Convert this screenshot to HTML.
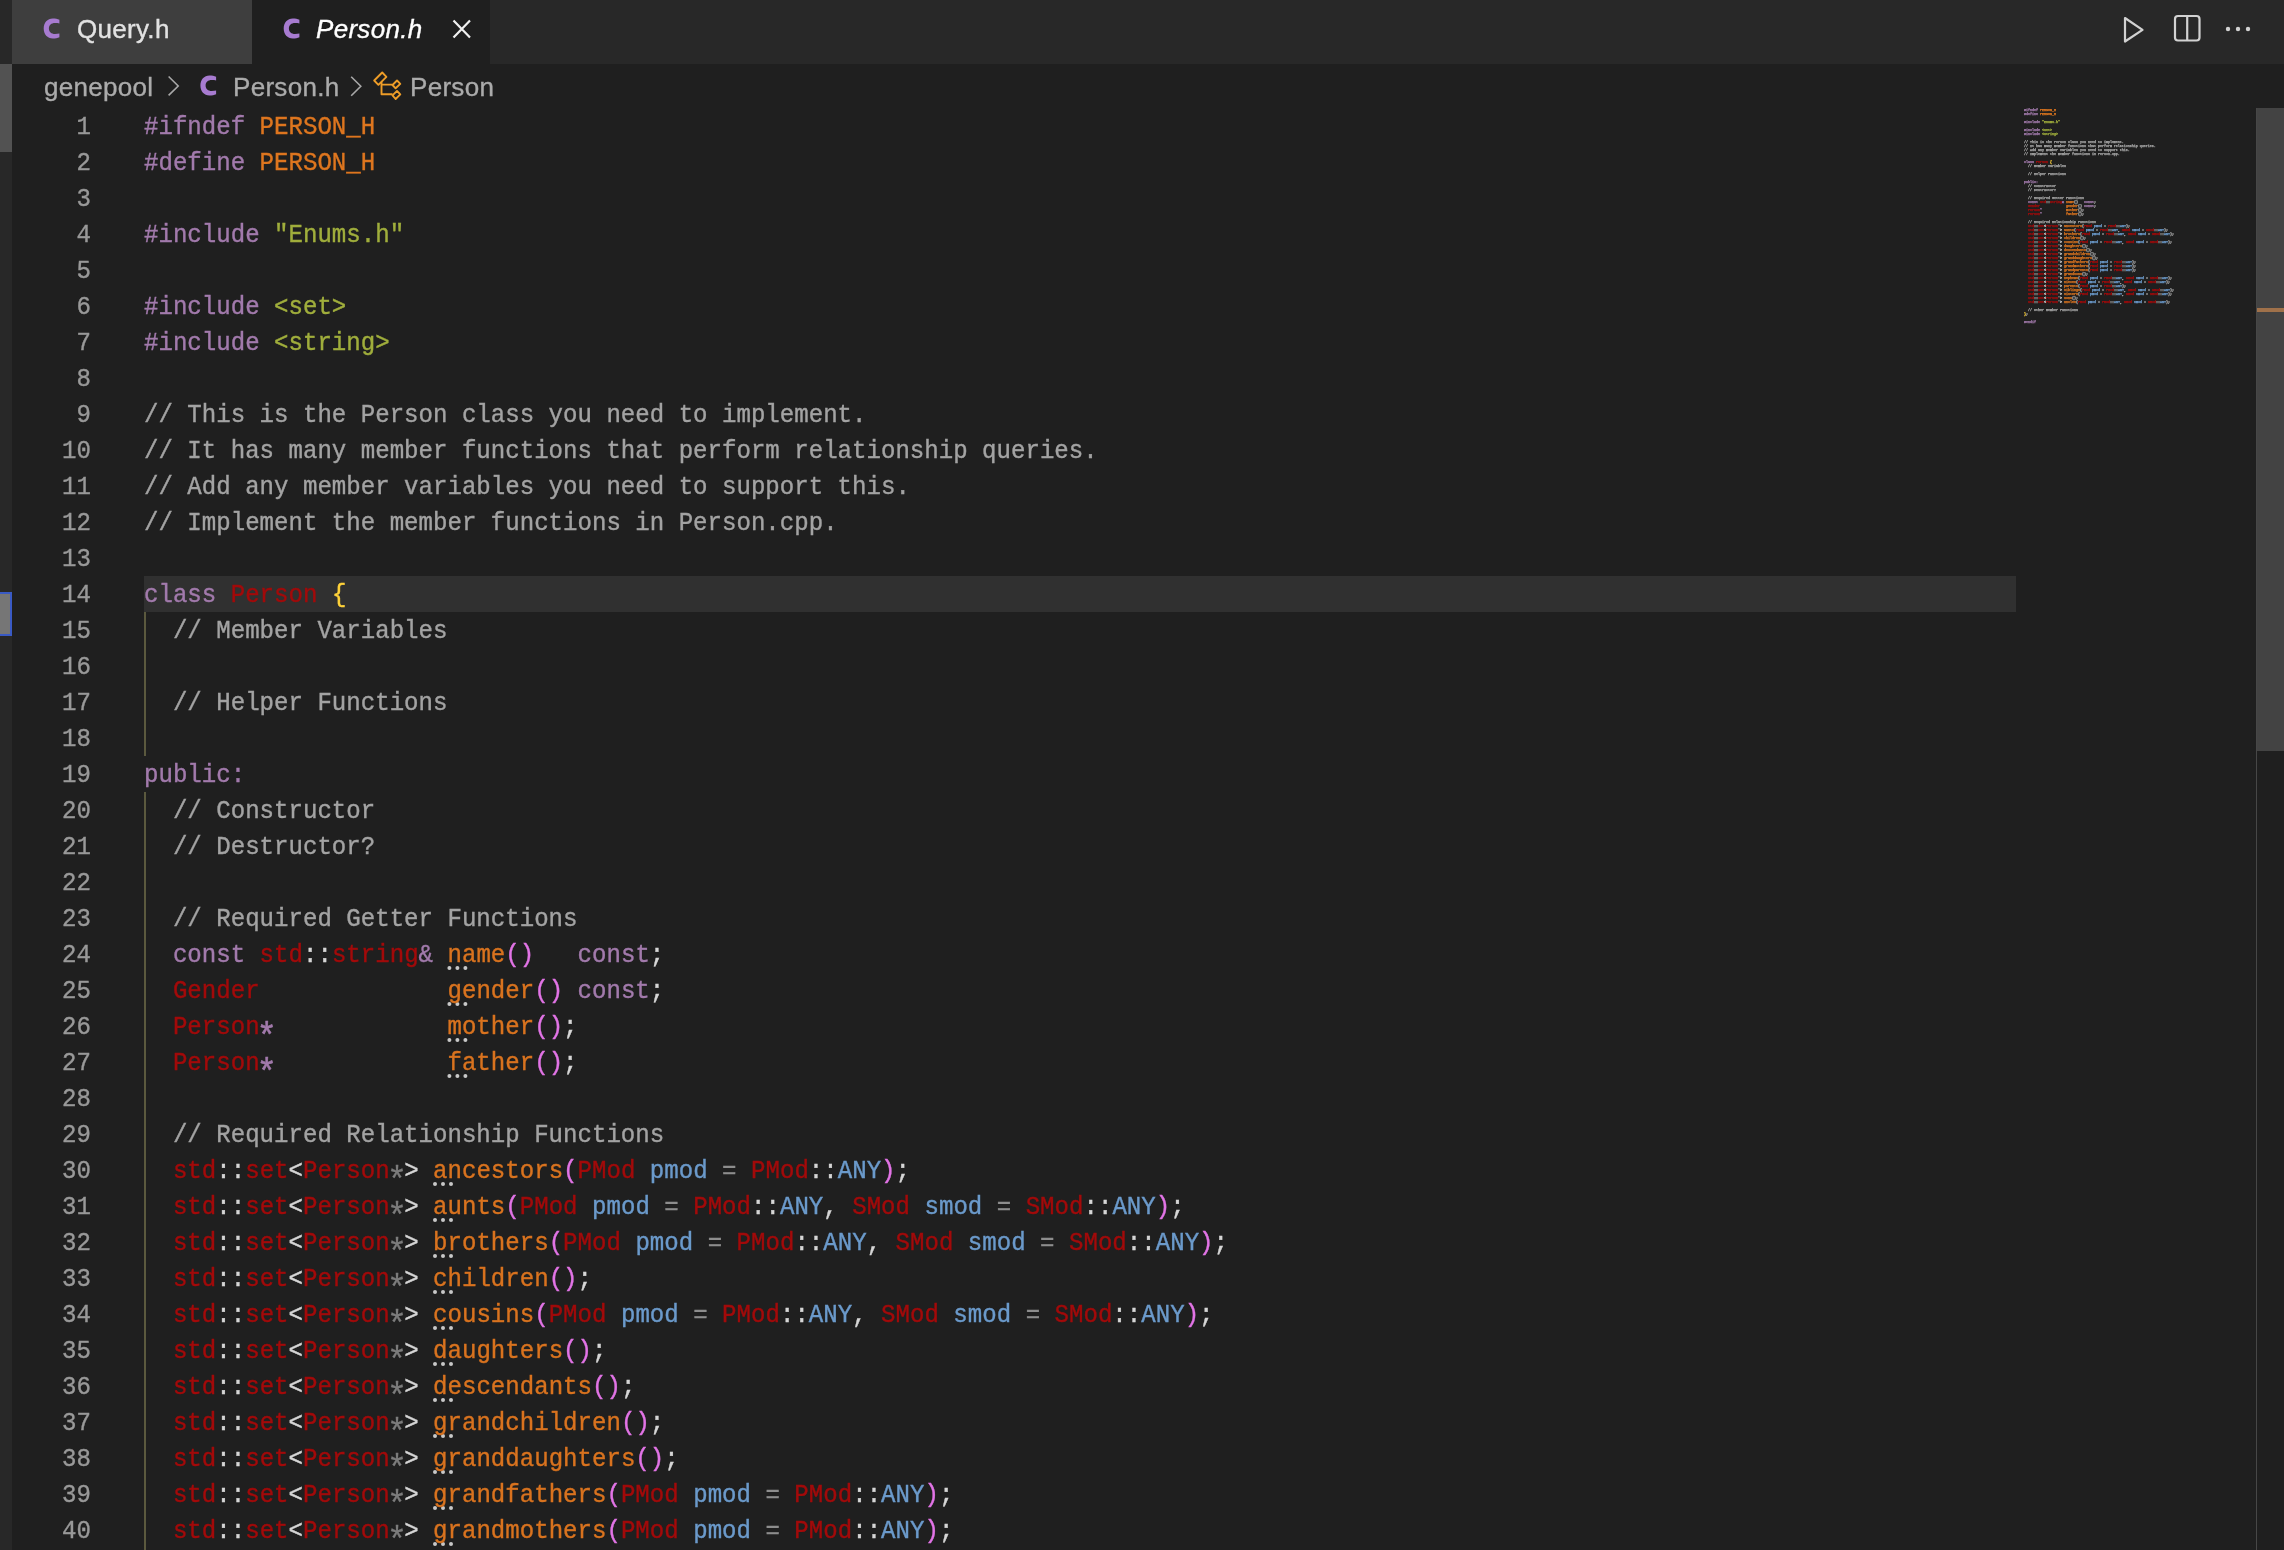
<!DOCTYPE html>
<html><head><meta charset="utf-8">
<style>
html,body{margin:0;padding:0;}
body{width:2284px;height:1550px;overflow:hidden;background:#1F1F1F;position:relative;font-family:"Liberation Sans",sans-serif;}
.abs{position:absolute;}
#tabbar{left:0;top:0;width:2284px;height:64px;background:#282828;}
#lstrip{left:0;top:0;width:12px;height:1550px;background:#282828;}
#tab1{left:12px;top:0;width:240px;height:64px;background:#3E3E3E;}
#tab2{left:252px;top:0;width:238px;height:64px;background:#1F1F1F;}
.ui{position:absolute;font-size:26px;white-space:pre;line-height:30px;will-change:transform;-webkit-text-stroke:0.35px currentColor;letter-spacing:0.3px}
.mono{font-family:"Liberation Mono",monospace;}
#code{left:144px;top:109px;transform-origin:0 0;transform:scaleX(0.92614);}
.ln{position:absolute;left:0;height:36px;line-height:36px;font-size:26px;white-space:pre;font-family:"Liberation Mono",monospace;color:#D6D6D6;-webkit-text-stroke:0.4px currentColor;}
.num{position:absolute;left:0;width:91px;text-align:right;height:36px;line-height:36px;font-size:26px;font-family:"Liberation Mono",monospace;color:#999999;-webkit-text-stroke:0.4px currentColor;}
.mml{position:absolute;left:0;height:4px;line-height:4px;font-size:3.333px;white-space:pre;font-family:"Liberation Mono",monospace;color:#D6D6D6;font-weight:bold;}
.ln .ast,.ln .asp{display:inline-block;width:15.6px;font-size:36px;height:36px;line-height:36px;vertical-align:top;position:relative;top:11.5px;left:-3px;text-align:left;-webkit-text-stroke:0.6px currentColor}
.ln .ast{-webkit-text-stroke:0.3px currentColor}
.mml .ast,.mml .asp{top:0}
.mml .par{color:#BDBDBD}
.mml{-webkit-text-stroke:0.25px currentColor}
.pp{color:#A27AAC}
.kw{color:#A27AAC}
.mac{color:#DE761F}
.str{color:#A0AE3C}
.cm{color:#A3A3A3}
.ty{color:#A20A0A}
.fn{color:#D9731F}
.par{color:#E274E6}
.br{color:#FFD23A}
.pun{color:#D6D6D6}
.op{color:#8E8E8E}
.amp{color:#A27AAC}
.var{color:#6B9ACB}
.txt{color:#D6D6D6}
.ast{color:#7C7C7C}
.asp{color:#A27AAC}
</style></head><body>
<div id="tabbar" class="abs"></div>
<div id="lstrip" class="abs"></div>
<div class="abs" style="left:0;top:64px;width:12px;height:88px;background:#525252"></div>
<div class="abs" style="left:0;top:592px;width:10px;height:40px;background:#767676;border:2px solid #3A5AC4;border-left:none"></div>
<div id="tab1" class="abs"></div>
<div id="tab2" class="abs"></div>
<!-- line highlight -->
<div class="abs" style="left:144px;top:576px;width:1872px;height:36px;background:#303030"></div>
<!-- indent guides -->
<div class="abs" style="left:144px;top:612px;width:2px;height:144px;background:#5B593E"></div>
<div class="abs" style="left:144px;top:792px;width:2px;height:758px;background:#5B593E"></div>
<!-- scrollbar -->
<div class="abs" style="left:2256px;top:108px;width:1px;height:1442px;background:#474747"></div>
<div class="abs" style="left:2257px;top:108px;width:27px;height:643px;background:#434343"></div>
<div class="abs" style="left:2257px;top:308px;width:27px;height:4px;background:#A0714A"></div>

<!-- tab texts -->
<div class="ui" style="left:77px;top:14px;color:#E2E2E2">Query.h</div>
<div class="ui" style="left:316px;top:14px;color:#FFFFFF;font-style:italic">Person.h</div>
<div class="ui" style="left:44px;top:72px;color:#ABABAB">genepool</div>
<div class="ui" style="left:233px;top:72px;color:#ABABAB">Person.h</div>
<div class="ui" style="left:410px;top:72px;color:#ABABAB">Person</div>

<svg class="abs" style="left:0;top:0" width="2284" height="1550" viewBox="0 0 2284 1550">
 <g fill="#A77BD0">
  <path d="M59.4,19.8 C57.6,18.9 55.3,18.5 52.8,18.5 C47.4,18.5 43.7,22.7 43.7,28.5 C43.7,34.3 47.4,38.5 52.8,38.5 C55.3,38.5 57.6,38.1 59.4,37.2 L59.4,33.6 C58.2,33.9 56.6,34 55,34 C51.3,34 48.9,31.8 48.9,28.5 C48.9,25.2 51.3,23 55,23 C56.6,23 58.2,23.1 59.4,23.4 Z"/>
  <path d="M59.4,19.8 C57.6,18.9 55.3,18.5 52.8,18.5 C47.4,18.5 43.7,22.7 43.7,28.5 C43.7,34.3 47.4,38.5 52.8,38.5 C55.3,38.5 57.6,38.1 59.4,37.2 L59.4,33.6 C58.2,33.9 56.6,34 55,34 C51.3,34 48.9,31.8 48.9,28.5 C48.9,25.2 51.3,23 55,23 C56.6,23 58.2,23.1 59.4,23.4 Z" transform="translate(240,0)"/>
  <path d="M59.4,19.8 C57.6,18.9 55.3,18.5 52.8,18.5 C47.4,18.5 43.7,22.7 43.7,28.5 C43.7,34.3 47.4,38.5 52.8,38.5 C55.3,38.5 57.6,38.1 59.4,37.2 L59.4,33.6 C58.2,33.9 56.6,34 55,34 C51.3,34 48.9,31.8 48.9,28.5 C48.9,25.2 51.3,23 55,23 C56.6,23 58.2,23.1 59.4,23.4 Z" transform="translate(156.7,57)"/>
 </g>
 <g fill="none" stroke="#F0F0F0" stroke-width="2.2" stroke-linecap="butt">
  <path d="M453.5 20.5 L470 37.5 M470 20.5 L453.5 37.5"/>
 </g>
 <g fill="none" stroke="#D2D2D2" stroke-width="2.2" stroke-linejoin="miter">
  <path d="M2125 18 L2142.5 29.8 L2125 41.5 Z" stroke-linejoin="round"/>
  <rect x="2175" y="16" width="24.5" height="24.5" rx="3"/>
  <path d="M2187.2 16 V40.5"/>
 </g>
 <g fill="#D2D2D2">
  <circle cx="2228" cy="29" r="2.2"/><circle cx="2238" cy="29" r="2.2"/><circle cx="2248" cy="29" r="2.2"/>
 </g>
 <g fill="none" stroke="#A8A8A8" stroke-width="1.6">
  <path d="M168.6 76.5 L178.2 86 L168.6 95.4"/>
  <path d="M351.2 76.8 L360.8 86.2 L351.2 95.8"/>
 </g>
 <g fill="none" stroke="#EE9D28" stroke-width="1.9" stroke-linejoin="round">
  <path d="M374.2 80.5 L382.2 72.5 L386.4 76.8 L378.4 84.8 Z"/>
  <path d="M381.5 82 V94.3 H392.5 M381.5 84.6 H392"/>
  <path d="M392.5 85 L397 80.5 L400.3 83.9 L395.6 88.3 Z"/>
  <path d="M392.5 95.4 L397 90.9 L400.3 94.3 L395.6 99 Z"/>
 </g>
 <g fill="#C8C8C8">
<circle cx="449.4" cy="968.0" r="2"/>
<circle cx="457.4" cy="968.0" r="2"/>
<circle cx="465.4" cy="968.0" r="2"/>
<circle cx="449.4" cy="1004.0" r="2"/>
<circle cx="457.4" cy="1004.0" r="2"/>
<circle cx="465.4" cy="1004.0" r="2"/>
<circle cx="449.4" cy="1040.0" r="2"/>
<circle cx="457.4" cy="1040.0" r="2"/>
<circle cx="465.4" cy="1040.0" r="2"/>
<circle cx="449.4" cy="1076.0" r="2"/>
<circle cx="457.4" cy="1076.0" r="2"/>
<circle cx="465.4" cy="1076.0" r="2"/>
<circle cx="435.0" cy="1184.0" r="2"/>
<circle cx="443.0" cy="1184.0" r="2"/>
<circle cx="451.0" cy="1184.0" r="2"/>
<circle cx="435.0" cy="1220.0" r="2"/>
<circle cx="443.0" cy="1220.0" r="2"/>
<circle cx="451.0" cy="1220.0" r="2"/>
<circle cx="435.0" cy="1256.0" r="2"/>
<circle cx="443.0" cy="1256.0" r="2"/>
<circle cx="451.0" cy="1256.0" r="2"/>
<circle cx="435.0" cy="1292.0" r="2"/>
<circle cx="443.0" cy="1292.0" r="2"/>
<circle cx="451.0" cy="1292.0" r="2"/>
<circle cx="435.0" cy="1328.0" r="2"/>
<circle cx="443.0" cy="1328.0" r="2"/>
<circle cx="451.0" cy="1328.0" r="2"/>
<circle cx="435.0" cy="1364.0" r="2"/>
<circle cx="443.0" cy="1364.0" r="2"/>
<circle cx="451.0" cy="1364.0" r="2"/>
<circle cx="435.0" cy="1400.0" r="2"/>
<circle cx="443.0" cy="1400.0" r="2"/>
<circle cx="451.0" cy="1400.0" r="2"/>
<circle cx="435.0" cy="1436.0" r="2"/>
<circle cx="443.0" cy="1436.0" r="2"/>
<circle cx="451.0" cy="1436.0" r="2"/>
<circle cx="435.0" cy="1472.0" r="2"/>
<circle cx="443.0" cy="1472.0" r="2"/>
<circle cx="451.0" cy="1472.0" r="2"/>
<circle cx="435.0" cy="1508.0" r="2"/>
<circle cx="443.0" cy="1508.0" r="2"/>
<circle cx="451.0" cy="1508.0" r="2"/>
<circle cx="435.0" cy="1544.0" r="2"/>
<circle cx="443.0" cy="1544.0" r="2"/>
<circle cx="451.0" cy="1544.0" r="2"/>
 </g>
</svg>

<div id="minimap" class="abs" style="left:2024px;top:108px;width:230px;height:260px;">
<div class="mml" style="top:0px"><span class="pp">#ifndef</span> <span class="mac">PERSON_H</span></div>
<div class="mml" style="top:4px"><span class="pp">#define</span> <span class="mac">PERSON_H</span></div>
<div class="mml" style="top:8px"></div>
<div class="mml" style="top:12px"><span class="pp">#include</span> <span class="str">&quot;Enums.h&quot;</span></div>
<div class="mml" style="top:16px"></div>
<div class="mml" style="top:20px"><span class="pp">#include</span> <span class="str">&lt;set&gt;</span></div>
<div class="mml" style="top:24px"><span class="pp">#include</span> <span class="str">&lt;string&gt;</span></div>
<div class="mml" style="top:28px"></div>
<div class="mml" style="top:32px"><span class="cm">// This is the Person class you need to implement.</span></div>
<div class="mml" style="top:36px"><span class="cm">// It has many member functions that perform relationship queries.</span></div>
<div class="mml" style="top:40px"><span class="cm">// Add any member variables you need to support this.</span></div>
<div class="mml" style="top:44px"><span class="cm">// Implement the member functions in Person.cpp.</span></div>
<div class="mml" style="top:48px"></div>
<div class="mml" style="top:52px"><span class="kw">class</span> <span class="ty">Person</span> <span class="br">{</span></div>
<div class="mml" style="top:56px">  <span class="cm">// Member Variables</span></div>
<div class="mml" style="top:60px"></div>
<div class="mml" style="top:64px">  <span class="cm">// Helper Functions</span></div>
<div class="mml" style="top:68px"></div>
<div class="mml" style="top:72px"><span class="kw">public:</span></div>
<div class="mml" style="top:76px">  <span class="cm">// Constructor</span></div>
<div class="mml" style="top:80px">  <span class="cm">// Destructor?</span></div>
<div class="mml" style="top:84px"></div>
<div class="mml" style="top:88px">  <span class="cm">// Required Getter Functions</span></div>
<div class="mml" style="top:92px">  <span class="kw">const</span> <span class="ty">std</span><span class="pun">::</span><span class="ty">string</span><span class="amp">&amp;</span> <span class="fn">name</span><span class="par">()</span>   <span class="kw">const</span><span class="pun">;</span></div>
<div class="mml" style="top:96px">  <span class="ty">Gender</span>             <span class="fn">gender</span><span class="par">()</span> <span class="kw">const</span><span class="pun">;</span></div>
<div class="mml" style="top:100px">  <span class="ty">Person</span><span class="asp">*</span>            <span class="fn">mother</span><span class="par">()</span><span class="pun">;</span></div>
<div class="mml" style="top:104px">  <span class="ty">Person</span><span class="asp">*</span>            <span class="fn">father</span><span class="par">()</span><span class="pun">;</span></div>
<div class="mml" style="top:108px"></div>
<div class="mml" style="top:112px">  <span class="cm">// Required Relationship Functions</span></div>
<div class="mml" style="top:116px">  <span class="ty">std</span><span class="pun">::</span><span class="ty">set</span><span class="pun">&lt;</span><span class="ty">Person</span><span class="ast">*</span><span class="pun">&gt;</span> <span class="fn">ancestors</span><span class="par">(</span><span class="ty">PMod</span> <span class="var">pmod</span> <span class="op">=</span> <span class="ty">PMod</span><span class="pun">::</span><span class="var">ANY</span><span class="par">)</span><span class="pun">;</span></div>
<div class="mml" style="top:120px">  <span class="ty">std</span><span class="pun">::</span><span class="ty">set</span><span class="pun">&lt;</span><span class="ty">Person</span><span class="ast">*</span><span class="pun">&gt;</span> <span class="fn">aunts</span><span class="par">(</span><span class="ty">PMod</span> <span class="var">pmod</span> <span class="op">=</span> <span class="ty">PMod</span><span class="pun">::</span><span class="var">ANY</span><span class="pun">,</span> <span class="ty">SMod</span> <span class="var">smod</span> <span class="op">=</span> <span class="ty">SMod</span><span class="pun">::</span><span class="var">ANY</span><span class="par">)</span><span class="pun">;</span></div>
<div class="mml" style="top:124px">  <span class="ty">std</span><span class="pun">::</span><span class="ty">set</span><span class="pun">&lt;</span><span class="ty">Person</span><span class="ast">*</span><span class="pun">&gt;</span> <span class="fn">brothers</span><span class="par">(</span><span class="ty">PMod</span> <span class="var">pmod</span> <span class="op">=</span> <span class="ty">PMod</span><span class="pun">::</span><span class="var">ANY</span><span class="pun">,</span> <span class="ty">SMod</span> <span class="var">smod</span> <span class="op">=</span> <span class="ty">SMod</span><span class="pun">::</span><span class="var">ANY</span><span class="par">)</span><span class="pun">;</span></div>
<div class="mml" style="top:128px">  <span class="ty">std</span><span class="pun">::</span><span class="ty">set</span><span class="pun">&lt;</span><span class="ty">Person</span><span class="ast">*</span><span class="pun">&gt;</span> <span class="fn">children</span><span class="par">(</span><span class="par">)</span><span class="pun">;</span></div>
<div class="mml" style="top:132px">  <span class="ty">std</span><span class="pun">::</span><span class="ty">set</span><span class="pun">&lt;</span><span class="ty">Person</span><span class="ast">*</span><span class="pun">&gt;</span> <span class="fn">cousins</span><span class="par">(</span><span class="ty">PMod</span> <span class="var">pmod</span> <span class="op">=</span> <span class="ty">PMod</span><span class="pun">::</span><span class="var">ANY</span><span class="pun">,</span> <span class="ty">SMod</span> <span class="var">smod</span> <span class="op">=</span> <span class="ty">SMod</span><span class="pun">::</span><span class="var">ANY</span><span class="par">)</span><span class="pun">;</span></div>
<div class="mml" style="top:136px">  <span class="ty">std</span><span class="pun">::</span><span class="ty">set</span><span class="pun">&lt;</span><span class="ty">Person</span><span class="ast">*</span><span class="pun">&gt;</span> <span class="fn">daughters</span><span class="par">(</span><span class="par">)</span><span class="pun">;</span></div>
<div class="mml" style="top:140px">  <span class="ty">std</span><span class="pun">::</span><span class="ty">set</span><span class="pun">&lt;</span><span class="ty">Person</span><span class="ast">*</span><span class="pun">&gt;</span> <span class="fn">descendants</span><span class="par">(</span><span class="par">)</span><span class="pun">;</span></div>
<div class="mml" style="top:144px">  <span class="ty">std</span><span class="pun">::</span><span class="ty">set</span><span class="pun">&lt;</span><span class="ty">Person</span><span class="ast">*</span><span class="pun">&gt;</span> <span class="fn">grandchildren</span><span class="par">(</span><span class="par">)</span><span class="pun">;</span></div>
<div class="mml" style="top:148px">  <span class="ty">std</span><span class="pun">::</span><span class="ty">set</span><span class="pun">&lt;</span><span class="ty">Person</span><span class="ast">*</span><span class="pun">&gt;</span> <span class="fn">granddaughters</span><span class="par">(</span><span class="par">)</span><span class="pun">;</span></div>
<div class="mml" style="top:152px">  <span class="ty">std</span><span class="pun">::</span><span class="ty">set</span><span class="pun">&lt;</span><span class="ty">Person</span><span class="ast">*</span><span class="pun">&gt;</span> <span class="fn">grandfathers</span><span class="par">(</span><span class="ty">PMod</span> <span class="var">pmod</span> <span class="op">=</span> <span class="ty">PMod</span><span class="pun">::</span><span class="var">ANY</span><span class="par">)</span><span class="pun">;</span></div>
<div class="mml" style="top:156px">  <span class="ty">std</span><span class="pun">::</span><span class="ty">set</span><span class="pun">&lt;</span><span class="ty">Person</span><span class="ast">*</span><span class="pun">&gt;</span> <span class="fn">grandmothers</span><span class="par">(</span><span class="ty">PMod</span> <span class="var">pmod</span> <span class="op">=</span> <span class="ty">PMod</span><span class="pun">::</span><span class="var">ANY</span><span class="par">)</span><span class="pun">;</span></div>
<div class="mml" style="top:160px">  <span class="ty">std</span><span class="pun">::</span><span class="ty">set</span><span class="pun">&lt;</span><span class="ty">Person</span><span class="ast">*</span><span class="pun">&gt;</span> <span class="fn">grandparents</span><span class="par">(</span><span class="ty">PMod</span> <span class="var">pmod</span> <span class="op">=</span> <span class="ty">PMod</span><span class="pun">::</span><span class="var">ANY</span><span class="par">)</span><span class="pun">;</span></div>
<div class="mml" style="top:164px">  <span class="ty">std</span><span class="pun">::</span><span class="ty">set</span><span class="pun">&lt;</span><span class="ty">Person</span><span class="ast">*</span><span class="pun">&gt;</span> <span class="fn">grandsons</span><span class="par">(</span><span class="par">)</span><span class="pun">;</span></div>
<div class="mml" style="top:168px">  <span class="ty">std</span><span class="pun">::</span><span class="ty">set</span><span class="pun">&lt;</span><span class="ty">Person</span><span class="ast">*</span><span class="pun">&gt;</span> <span class="fn">nephews</span><span class="par">(</span><span class="ty">PMod</span> <span class="var">pmod</span> <span class="op">=</span> <span class="ty">PMod</span><span class="pun">::</span><span class="var">ANY</span><span class="pun">,</span> <span class="ty">SMod</span> <span class="var">smod</span> <span class="op">=</span> <span class="ty">SMod</span><span class="pun">::</span><span class="var">ANY</span><span class="par">)</span><span class="pun">;</span></div>
<div class="mml" style="top:172px">  <span class="ty">std</span><span class="pun">::</span><span class="ty">set</span><span class="pun">&lt;</span><span class="ty">Person</span><span class="ast">*</span><span class="pun">&gt;</span> <span class="fn">nieces</span><span class="par">(</span><span class="ty">PMod</span> <span class="var">pmod</span> <span class="op">=</span> <span class="ty">PMod</span><span class="pun">::</span><span class="var">ANY</span><span class="pun">,</span> <span class="ty">SMod</span> <span class="var">smod</span> <span class="op">=</span> <span class="ty">SMod</span><span class="pun">::</span><span class="var">ANY</span><span class="par">)</span><span class="pun">;</span></div>
<div class="mml" style="top:176px">  <span class="ty">std</span><span class="pun">::</span><span class="ty">set</span><span class="pun">&lt;</span><span class="ty">Person</span><span class="ast">*</span><span class="pun">&gt;</span> <span class="fn">parents</span><span class="par">(</span><span class="ty">PMod</span> <span class="var">pmod</span> <span class="op">=</span> <span class="ty">PMod</span><span class="pun">::</span><span class="var">ANY</span><span class="par">)</span><span class="pun">;</span></div>
<div class="mml" style="top:180px">  <span class="ty">std</span><span class="pun">::</span><span class="ty">set</span><span class="pun">&lt;</span><span class="ty">Person</span><span class="ast">*</span><span class="pun">&gt;</span> <span class="fn">siblings</span><span class="par">(</span><span class="ty">PMod</span> <span class="var">pmod</span> <span class="op">=</span> <span class="ty">PMod</span><span class="pun">::</span><span class="var">ANY</span><span class="pun">,</span> <span class="ty">SMod</span> <span class="var">smod</span> <span class="op">=</span> <span class="ty">SMod</span><span class="pun">::</span><span class="var">ANY</span><span class="par">)</span><span class="pun">;</span></div>
<div class="mml" style="top:184px">  <span class="ty">std</span><span class="pun">::</span><span class="ty">set</span><span class="pun">&lt;</span><span class="ty">Person</span><span class="ast">*</span><span class="pun">&gt;</span> <span class="fn">sisters</span><span class="par">(</span><span class="ty">PMod</span> <span class="var">pmod</span> <span class="op">=</span> <span class="ty">PMod</span><span class="pun">::</span><span class="var">ANY</span><span class="pun">,</span> <span class="ty">SMod</span> <span class="var">smod</span> <span class="op">=</span> <span class="ty">SMod</span><span class="pun">::</span><span class="var">ANY</span><span class="par">)</span><span class="pun">;</span></div>
<div class="mml" style="top:188px">  <span class="ty">std</span><span class="pun">::</span><span class="ty">set</span><span class="pun">&lt;</span><span class="ty">Person</span><span class="ast">*</span><span class="pun">&gt;</span> <span class="fn">sons</span><span class="par">(</span><span class="par">)</span><span class="pun">;</span></div>
<div class="mml" style="top:192px">  <span class="ty">std</span><span class="pun">::</span><span class="ty">set</span><span class="pun">&lt;</span><span class="ty">Person</span><span class="ast">*</span><span class="pun">&gt;</span> <span class="fn">uncles</span><span class="par">(</span><span class="ty">PMod</span> <span class="var">pmod</span> <span class="op">=</span> <span class="ty">PMod</span><span class="pun">::</span><span class="var">ANY</span><span class="pun">,</span> <span class="ty">SMod</span> <span class="var">smod</span> <span class="op">=</span> <span class="ty">SMod</span><span class="pun">::</span><span class="var">ANY</span><span class="par">)</span><span class="pun">;</span></div>
<div class="mml" style="top:196px"></div>
<div class="mml" style="top:200px">  <span class="cm">// Other Member Functions</span></div>
<div class="mml" style="top:204px"><span class="br">}</span><span class="pun">;</span></div>
<div class="mml" style="top:208px"></div>
<div class="mml" style="top:212px"><span class="pp">#endif</span></div>
</div>
<div id="nums" class="abs" style="left:0;top:1px;transform-origin:91px 0;transform:scaleX(0.92614)">
<div class="num" style="top:108px">1</div>
<div class="num" style="top:144px">2</div>
<div class="num" style="top:180px">3</div>
<div class="num" style="top:216px">4</div>
<div class="num" style="top:252px">5</div>
<div class="num" style="top:288px">6</div>
<div class="num" style="top:324px">7</div>
<div class="num" style="top:360px">8</div>
<div class="num" style="top:396px">9</div>
<div class="num" style="top:432px">10</div>
<div class="num" style="top:468px">11</div>
<div class="num" style="top:504px">12</div>
<div class="num" style="top:540px">13</div>
<div class="num" style="top:576px">14</div>
<div class="num" style="top:612px">15</div>
<div class="num" style="top:648px">16</div>
<div class="num" style="top:684px">17</div>
<div class="num" style="top:720px">18</div>
<div class="num" style="top:756px">19</div>
<div class="num" style="top:792px">20</div>
<div class="num" style="top:828px">21</div>
<div class="num" style="top:864px">22</div>
<div class="num" style="top:900px">23</div>
<div class="num" style="top:936px">24</div>
<div class="num" style="top:972px">25</div>
<div class="num" style="top:1008px">26</div>
<div class="num" style="top:1044px">27</div>
<div class="num" style="top:1080px">28</div>
<div class="num" style="top:1116px">29</div>
<div class="num" style="top:1152px">30</div>
<div class="num" style="top:1188px">31</div>
<div class="num" style="top:1224px">32</div>
<div class="num" style="top:1260px">33</div>
<div class="num" style="top:1296px">34</div>
<div class="num" style="top:1332px">35</div>
<div class="num" style="top:1368px">36</div>
<div class="num" style="top:1404px">37</div>
<div class="num" style="top:1440px">38</div>
<div class="num" style="top:1476px">39</div>
<div class="num" style="top:1512px">40</div>
</div>
<div id="code" class="abs">
<div class="ln" style="top:0px"><span class="pp">#ifndef</span> <span class="mac">PERSON_H</span></div>
<div class="ln" style="top:36px"><span class="pp">#define</span> <span class="mac">PERSON_H</span></div>
<div class="ln" style="top:72px"></div>
<div class="ln" style="top:108px"><span class="pp">#include</span> <span class="str">&quot;Enums.h&quot;</span></div>
<div class="ln" style="top:144px"></div>
<div class="ln" style="top:180px"><span class="pp">#include</span> <span class="str">&lt;set&gt;</span></div>
<div class="ln" style="top:216px"><span class="pp">#include</span> <span class="str">&lt;string&gt;</span></div>
<div class="ln" style="top:252px"></div>
<div class="ln" style="top:288px"><span class="cm">// This is the Person class you need to implement.</span></div>
<div class="ln" style="top:324px"><span class="cm">// It has many member functions that perform relationship queries.</span></div>
<div class="ln" style="top:360px"><span class="cm">// Add any member variables you need to support this.</span></div>
<div class="ln" style="top:396px"><span class="cm">// Implement the member functions in Person.cpp.</span></div>
<div class="ln" style="top:432px"></div>
<div class="ln" style="top:468px"><span class="kw">class</span> <span class="ty">Person</span> <span class="br">{</span></div>
<div class="ln" style="top:504px">  <span class="cm">// Member Variables</span></div>
<div class="ln" style="top:540px"></div>
<div class="ln" style="top:576px">  <span class="cm">// Helper Functions</span></div>
<div class="ln" style="top:612px"></div>
<div class="ln" style="top:648px"><span class="kw">public:</span></div>
<div class="ln" style="top:684px">  <span class="cm">// Constructor</span></div>
<div class="ln" style="top:720px">  <span class="cm">// Destructor?</span></div>
<div class="ln" style="top:756px"></div>
<div class="ln" style="top:792px">  <span class="cm">// Required Getter Functions</span></div>
<div class="ln" style="top:828px">  <span class="kw">const</span> <span class="ty">std</span><span class="pun">::</span><span class="ty">string</span><span class="amp">&amp;</span> <span class="fn">name</span><span class="par">()</span>   <span class="kw">const</span><span class="pun">;</span></div>
<div class="ln" style="top:864px">  <span class="ty">Gender</span>             <span class="fn">gender</span><span class="par">()</span> <span class="kw">const</span><span class="pun">;</span></div>
<div class="ln" style="top:900px">  <span class="ty">Person</span><span class="asp">*</span>            <span class="fn">mother</span><span class="par">()</span><span class="pun">;</span></div>
<div class="ln" style="top:936px">  <span class="ty">Person</span><span class="asp">*</span>            <span class="fn">father</span><span class="par">()</span><span class="pun">;</span></div>
<div class="ln" style="top:972px"></div>
<div class="ln" style="top:1008px">  <span class="cm">// Required Relationship Functions</span></div>
<div class="ln" style="top:1044px">  <span class="ty">std</span><span class="pun">::</span><span class="ty">set</span><span class="pun">&lt;</span><span class="ty">Person</span><span class="ast">*</span><span class="pun">&gt;</span> <span class="fn">ancestors</span><span class="par">(</span><span class="ty">PMod</span> <span class="var">pmod</span> <span class="op">=</span> <span class="ty">PMod</span><span class="pun">::</span><span class="var">ANY</span><span class="par">)</span><span class="pun">;</span></div>
<div class="ln" style="top:1080px">  <span class="ty">std</span><span class="pun">::</span><span class="ty">set</span><span class="pun">&lt;</span><span class="ty">Person</span><span class="ast">*</span><span class="pun">&gt;</span> <span class="fn">aunts</span><span class="par">(</span><span class="ty">PMod</span> <span class="var">pmod</span> <span class="op">=</span> <span class="ty">PMod</span><span class="pun">::</span><span class="var">ANY</span><span class="pun">,</span> <span class="ty">SMod</span> <span class="var">smod</span> <span class="op">=</span> <span class="ty">SMod</span><span class="pun">::</span><span class="var">ANY</span><span class="par">)</span><span class="pun">;</span></div>
<div class="ln" style="top:1116px">  <span class="ty">std</span><span class="pun">::</span><span class="ty">set</span><span class="pun">&lt;</span><span class="ty">Person</span><span class="ast">*</span><span class="pun">&gt;</span> <span class="fn">brothers</span><span class="par">(</span><span class="ty">PMod</span> <span class="var">pmod</span> <span class="op">=</span> <span class="ty">PMod</span><span class="pun">::</span><span class="var">ANY</span><span class="pun">,</span> <span class="ty">SMod</span> <span class="var">smod</span> <span class="op">=</span> <span class="ty">SMod</span><span class="pun">::</span><span class="var">ANY</span><span class="par">)</span><span class="pun">;</span></div>
<div class="ln" style="top:1152px">  <span class="ty">std</span><span class="pun">::</span><span class="ty">set</span><span class="pun">&lt;</span><span class="ty">Person</span><span class="ast">*</span><span class="pun">&gt;</span> <span class="fn">children</span><span class="par">(</span><span class="par">)</span><span class="pun">;</span></div>
<div class="ln" style="top:1188px">  <span class="ty">std</span><span class="pun">::</span><span class="ty">set</span><span class="pun">&lt;</span><span class="ty">Person</span><span class="ast">*</span><span class="pun">&gt;</span> <span class="fn">cousins</span><span class="par">(</span><span class="ty">PMod</span> <span class="var">pmod</span> <span class="op">=</span> <span class="ty">PMod</span><span class="pun">::</span><span class="var">ANY</span><span class="pun">,</span> <span class="ty">SMod</span> <span class="var">smod</span> <span class="op">=</span> <span class="ty">SMod</span><span class="pun">::</span><span class="var">ANY</span><span class="par">)</span><span class="pun">;</span></div>
<div class="ln" style="top:1224px">  <span class="ty">std</span><span class="pun">::</span><span class="ty">set</span><span class="pun">&lt;</span><span class="ty">Person</span><span class="ast">*</span><span class="pun">&gt;</span> <span class="fn">daughters</span><span class="par">(</span><span class="par">)</span><span class="pun">;</span></div>
<div class="ln" style="top:1260px">  <span class="ty">std</span><span class="pun">::</span><span class="ty">set</span><span class="pun">&lt;</span><span class="ty">Person</span><span class="ast">*</span><span class="pun">&gt;</span> <span class="fn">descendants</span><span class="par">(</span><span class="par">)</span><span class="pun">;</span></div>
<div class="ln" style="top:1296px">  <span class="ty">std</span><span class="pun">::</span><span class="ty">set</span><span class="pun">&lt;</span><span class="ty">Person</span><span class="ast">*</span><span class="pun">&gt;</span> <span class="fn">grandchildren</span><span class="par">(</span><span class="par">)</span><span class="pun">;</span></div>
<div class="ln" style="top:1332px">  <span class="ty">std</span><span class="pun">::</span><span class="ty">set</span><span class="pun">&lt;</span><span class="ty">Person</span><span class="ast">*</span><span class="pun">&gt;</span> <span class="fn">granddaughters</span><span class="par">(</span><span class="par">)</span><span class="pun">;</span></div>
<div class="ln" style="top:1368px">  <span class="ty">std</span><span class="pun">::</span><span class="ty">set</span><span class="pun">&lt;</span><span class="ty">Person</span><span class="ast">*</span><span class="pun">&gt;</span> <span class="fn">grandfathers</span><span class="par">(</span><span class="ty">PMod</span> <span class="var">pmod</span> <span class="op">=</span> <span class="ty">PMod</span><span class="pun">::</span><span class="var">ANY</span><span class="par">)</span><span class="pun">;</span></div>
<div class="ln" style="top:1404px">  <span class="ty">std</span><span class="pun">::</span><span class="ty">set</span><span class="pun">&lt;</span><span class="ty">Person</span><span class="ast">*</span><span class="pun">&gt;</span> <span class="fn">grandmothers</span><span class="par">(</span><span class="ty">PMod</span> <span class="var">pmod</span> <span class="op">=</span> <span class="ty">PMod</span><span class="pun">::</span><span class="var">ANY</span><span class="par">)</span><span class="pun">;</span></div>
</div>
</body></html>
